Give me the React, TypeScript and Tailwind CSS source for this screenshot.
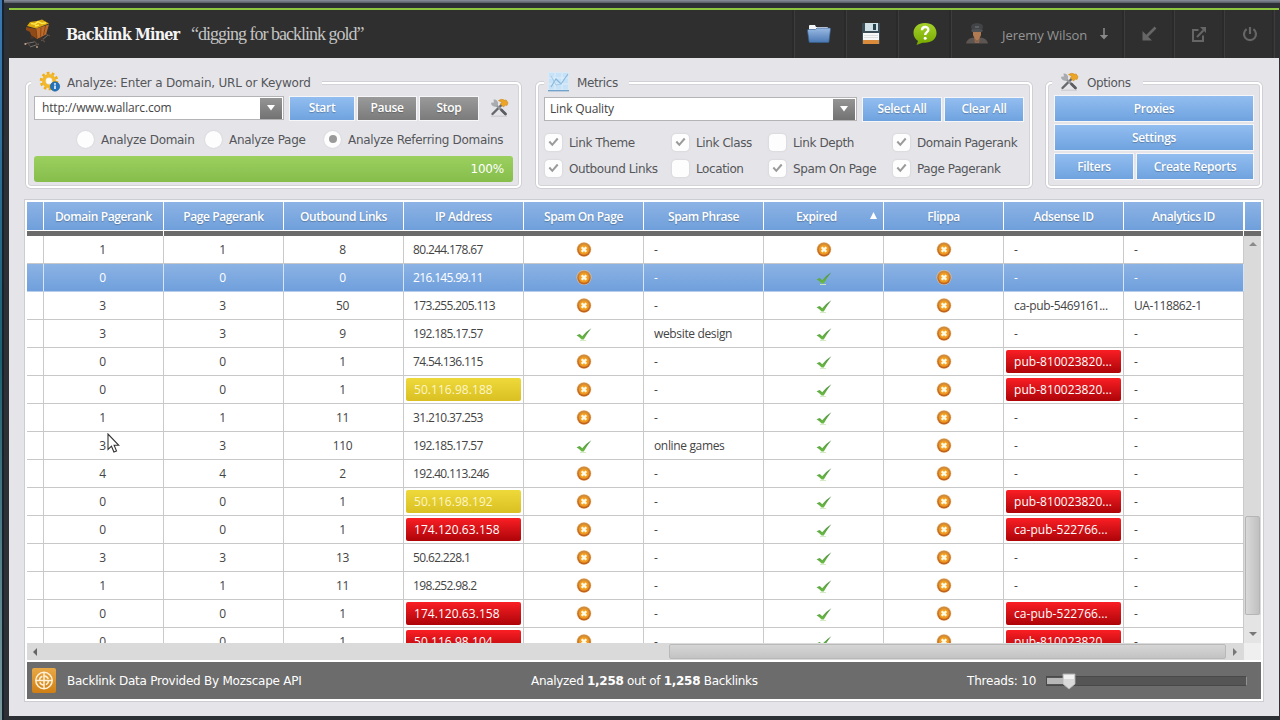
import React from 'react';

type Mark = 'yes' | 'no';

interface LinkRow {
  domainPr: string;
  pagePr: string;
  outbound: string;
  ip: string;
  ipFlag?: 'yellow' | 'red';
  spam: Mark;
  phrase: string;
  expired: Mark;
  adsense: string;
  adsenseFlag?: boolean;
  analytics: string;
  selected?: boolean;
}

const COLUMNS = [
  'Domain Pagerank',
  'Page Pagerank',
  'Outbound Links',
  'IP Address',
  'Spam On Page',
  'Spam Phrase',
  'Expired',
  'Flippa',
  'Adsense ID',
  'Analytics ID',
];

const ROWS: LinkRow[] = [
  { domainPr: '1', pagePr: '1', outbound: '8', ip: '80.244.178.67', spam: 'no', phrase: '-', expired: 'no', adsense: '-', analytics: '-' },
  { domainPr: '0', pagePr: '0', outbound: '0', ip: '216.145.99.11', spam: 'no', phrase: '-', expired: 'yes', adsense: '-', analytics: '-', selected: true },
  { domainPr: '3', pagePr: '3', outbound: '50', ip: '173.255.205.113', spam: 'no', phrase: '-', expired: 'yes', adsense: 'ca-pub-5469161...', analytics: 'UA-118862-1' },
  { domainPr: '3', pagePr: '3', outbound: '9', ip: '192.185.17.57', spam: 'yes', phrase: 'website design', expired: 'yes', adsense: '-', analytics: '-' },
  { domainPr: '0', pagePr: '0', outbound: '1', ip: '74.54.136.115', spam: 'no', phrase: '-', expired: 'yes', adsense: 'pub-810023820...', adsenseFlag: true, analytics: '-' },
  { domainPr: '0', pagePr: '0', outbound: '1', ip: '50.116.98.188', ipFlag: 'yellow', spam: 'no', phrase: '-', expired: 'yes', adsense: 'pub-810023820...', adsenseFlag: true, analytics: '-' },
  { domainPr: '1', pagePr: '1', outbound: '11', ip: '31.210.37.253', spam: 'no', phrase: '-', expired: 'yes', adsense: '-', analytics: '-' },
  { domainPr: '3', pagePr: '3', outbound: '110', ip: '192.185.17.57', spam: 'yes', phrase: 'online games', expired: 'yes', adsense: '-', analytics: '-' },
  { domainPr: '4', pagePr: '4', outbound: '2', ip: '192.40.113.246', spam: 'no', phrase: '-', expired: 'yes', adsense: '-', analytics: '-' },
  { domainPr: '0', pagePr: '0', outbound: '1', ip: '50.116.98.192', ipFlag: 'yellow', spam: 'no', phrase: '-', expired: 'yes', adsense: 'pub-810023820...', adsenseFlag: true, analytics: '-' },
  { domainPr: '0', pagePr: '0', outbound: '1', ip: '174.120.63.158', ipFlag: 'red', spam: 'no', phrase: '-', expired: 'yes', adsense: 'ca-pub-522766...', adsenseFlag: true, analytics: '-' },
  { domainPr: '3', pagePr: '3', outbound: '13', ip: '50.62.228.1', spam: 'no', phrase: '-', expired: 'yes', adsense: '-', analytics: '-' },
  { domainPr: '1', pagePr: '1', outbound: '11', ip: '198.252.98.2', spam: 'no', phrase: '-', expired: 'yes', adsense: '-', analytics: '-' },
  { domainPr: '0', pagePr: '0', outbound: '1', ip: '174.120.63.158', ipFlag: 'red', spam: 'no', phrase: '-', expired: 'yes', adsense: 'ca-pub-522766...', adsenseFlag: true, analytics: '-' },
  { domainPr: '0', pagePr: '0', outbound: '1', ip: '50.116.98.104', ipFlag: 'red', spam: 'no', phrase: '-', expired: 'yes', adsense: 'pub-810023820...', adsenseFlag: true, analytics: '-' },
];

/* ---------- icons ---------- */

const CartIcon = () => (
  <svg width="28" height="30" viewBox="0 0 28 30">
    <path d="M0 25l10-2M6 28l9-3M17 22l7-6" stroke="#77716d" strokeWidth="1" />
    <path d="M3 23l3 4M10 22l4 4M17 20l4 3M22 15l4 2" stroke="#5b4d45" strokeWidth="1.200" />
    <circle cx="1.500" cy="25" r="0.900" fill="#c7a58c" />
    <circle cx="13" cy="28" r="0.900" fill="#c7a58c" />
    <circle cx="8" cy="18.500" r="2.100" fill="#453329" />
    <circle cx="17" cy="19.500" r="2.100" fill="#453329" />
    <path d="M2 8l10 2 1 10-6-4-1-3-4-2z" fill="#8f4a17" />
    <path d="M12 9.500l13-4-3 10-9 4.500z" fill="#bd6c2b" />
    <path d="M12 10l1 9M17 8.500l-.5 9M21.500 7l-2 9" stroke="#7c3d12" strokeWidth="0.800" />
    <path d="M3 7l3-4 7-1 5-1.500 7 4-13 5z" fill="#dca90c" />
    <path d="M7 4.500l4 .7 3-2.500 4 1.800 4-.7M11 7l4-1" stroke="#fbe74e" strokeWidth="1.500" fill="none" />
  </svg>
);

const FolderIcon = () => (
  <svg width="26" height="22" viewBox="0 0 26 22">
    <defs>
      <linearGradient id="folder" x1="0" y1="0" x2="0" y2="1">
        <stop offset="0" stopColor="#9bbbe3" />
        <stop offset="1" stopColor="#4a78b4" />
      </linearGradient>
    </defs>
    <path d="M3 8V3q0-1 1-1h5l1 2h11q1 0 1 1v4z" fill="#f4f6fa" />
    <path d="M1.500 7.500q0-1 1-1h7l1.500-1.500h12.500q1 0 1 1L23 18.500q0 1-1 1H4q-1 0-1-1z" fill="url(#folder)" stroke="#37608f" strokeWidth="0.700" />
  </svg>
);

const FloppyIcon = () => (
  <svg width="20" height="24" viewBox="0 0 20 24">
    <path d="M1 2q0-1 1-1h17v21H1z" fill="#3a4d57" />
    <rect x="4" y="1" width="13" height="8" fill="#cfe0e6" />
    <rect x="12" y="2" width="3" height="6" fill="#274350" />
    <rect x="2" y="11" width="16" height="7" fill="#f7f7f7" />
    <path d="M3 13.500h14M3 15.500h14" stroke="#cfd4d6" strokeWidth="0.700" />
    <rect x="2" y="18" width="16" height="4" fill="#d98a3a" />
  </svg>
);

const HelpIcon = () => (
  <svg width="26" height="24" viewBox="0 0 26 24">
    <defs>
      <linearGradient id="help" x1="0" y1="0" x2="0" y2="1">
        <stop offset="0" stopColor="#a4d12a" />
        <stop offset="1" stopColor="#76a800" />
      </linearGradient>
    </defs>
    <path d="M13 1C6 1 1.500 5 1.500 11c0 3.500 2 6.300 4.500 8L4.500 23l6-2.300c8 .8 14-3.200 14-9.700C24.500 5 20 1 13 1z" fill="url(#help)" />
    <path d="M10 8.300c0-4.300 6.300-4.300 6.300-.6 0 2.400-3.100 2.400-3.100 5.300" stroke="#fff" strokeWidth="2.400" fill="none" />
    <circle cx="13.200" cy="16.300" r="1.500" fill="#fff" />
  </svg>
);

const AvatarIcon = () => (
  <svg width="24" height="24" viewBox="0 0 24 24">
    <path d="M1 21.500q1-5 7-6l4 2 4-2q6 1 7 6z" fill="#5c5552" />
    <path d="M8 10h8v3q-1 4-4 6-3-2-4-6z" fill="#b07a52" />
    <path d="M9 16l3 4 3-4-1 5h-4z" fill="#94694c" />
    <path d="M6 5q0-3.500 6-4 6 .5 6 4l-1 3H7z" fill="#424448" />
    <path d="M6 8q6-2 12 0l-1 2H7z" fill="#4f5155" />
    <path d="M10 5h4" stroke="#7a7a7a" strokeWidth="1" />
  </svg>
);

const DownArrowIcon = () => (
  <svg width="10" height="14" viewBox="0 0 10 14">
    <path d="M5 1v8" stroke="#8a8a8a" strokeWidth="1.600" />
    <path d="M.8 8h8.400L5 12.500z" fill="#8a8a8a" />
  </svg>
);

const MinimizeIcon = () => (
  <svg width="16" height="16" viewBox="0 0 16 16">
    <path d="M14.500 1.500L5 11" stroke="#666" strokeWidth="2.600" />
    <path d="M1.500 5v9.500H11L7.500 11 5 8.500z" fill="#666" />
  </svg>
);

const RestoreIcon = () => (
  <svg width="18" height="17" viewBox="0 0 18 17">
    <path d="M8.500 4H3v11h10V9.500" stroke="#666" strokeWidth="2" fill="none" />
    <path d="M7 11l6.500-6.800" stroke="#666" strokeWidth="2" />
    <path d="M10 1h6v6z" fill="#666" />
  </svg>
);

const PowerIcon = () => (
  <svg width="16" height="16" viewBox="0 0 16 16">
    <path d="M4.600 3.200a6 6 0 1 0 6.800 0M8 1v7" stroke="#666" strokeWidth="2.200" fill="none" />
  </svg>
);

const GearInfoIcon = () => (
  <svg width="22" height="22" viewBox="0 0 22 22">
    <circle cx="10" cy="10" r="7.800" fill="none" stroke="#f0ae1c" strokeWidth="3" strokeDasharray="2.700 2.200" />
    <circle cx="10" cy="10" r="5.200" fill="none" stroke="#f3b92d" strokeWidth="3.600" />
    <circle cx="10" cy="10" r="2.800" fill="#fdfaf0" />
    <circle cx="16" cy="15.500" r="4.700" fill="#2474bd" stroke="#1a5c9b" strokeWidth="0.600" />
    <path d="M16 14.500v3.500" stroke="#fff" strokeWidth="1.500" />
    <circle cx="16" cy="12.900" r="0.900" fill="#fff" />
  </svg>
);

const ChartIcon = () => (
  <svg width="21" height="20" viewBox="0 0 21 20">
    <rect x="0.500" y="0.500" width="20" height="17.500" fill="#c7e1f6" stroke="#d9e9f5" />
    <path d="M1 6h19M1 12h19M7 1v17M14 1v17" stroke="#e4f2fc" strokeWidth="0.800" />
    <path d="M3 15l5-8 5 5 7-10" stroke="#86b6dc" strokeWidth="1.100" fill="none" />
    <path d="M3 4l5 9 5-1" stroke="#9cc6e6" strokeWidth="0.900" fill="none" />
    <path d="M0 18.700h21" stroke="#6a9fc8" strokeWidth="1.300" />
  </svg>
);

const ToolsIcon = () => (
  <svg width="20" height="20" viewBox="0 0 20 20">
    <path d="M2 18.200h16" stroke="#cdcdd1" strokeWidth="1.300" />
    <path d="M13 6.500L3.500 16" stroke="#66686c" strokeWidth="2.400" strokeLinecap="round" />
    <path d="M6 6l10.500 10" stroke="#94969a" strokeWidth="2.400" strokeLinecap="round" />
    <path d="M12.500 12l4 4" stroke="#5b5d61" strokeWidth="2.700" strokeLinecap="round" />
    <path d="M4.500 1.500l.4 3-2.900.3A4 4 0 0 0 7.500 8.500L9 6.500A4 4 0 0 0 4.500 1.500z" fill="#a9abaf" />
    <path d="M9.500 2.500Q13 0 16 2.500l1-.7 2 3-1 2.700-1.500-.5-2 2L11.300 6l1.500-1.500z" fill="#eca525" stroke="#c77f12" strokeWidth="0.500" />
  </svg>
);

const MozIcon = () => (
  <svg width="24" height="26" viewBox="0 0 24 26">
    <defs>
      <linearGradient id="moz" x1="0" y1="0" x2="0" y2="1">
        <stop offset="0" stopColor="#e9a845" />
        <stop offset="1" stopColor="#cf7f14" />
      </linearGradient>
    </defs>
    <rect width="24" height="25" rx="2" fill="url(#moz)" />
    <g fill="none" stroke="#fff1d8" strokeWidth="1.500">
      <circle cx="12" cy="12.500" r="8.200" />
      <circle cx="12" cy="12.500" r="4.500" strokeDasharray="5 2" />
      <path d="M12 4v17M4 12.500h16" />
    </g>
  </svg>
);

const NoIcon = () => (
  <svg className="-mt-px" width="16" height="16" viewBox="0 0 16 16">
    <defs>
      <linearGradient id="no" x1="0" y1="0" x2="0" y2="1">
        <stop offset="0" stopColor="#cf9041" />
        <stop offset="1" stopColor="#c05f18" />
      </linearGradient>
      <radialGradient id="noIn">
        <stop offset="0" stopColor="#ffb52e" />
        <stop offset="1" stopColor="#eb9420" />
      </radialGradient>
    </defs>
    <circle cx="8" cy="8.500" r="7.500" fill="#f8d9b4" opacity="0.700" />
    <circle cx="8" cy="8.500" r="6.900" fill="url(#no)" />
    <circle cx="8" cy="8.500" r="5.200" fill="url(#noIn)" />
    <path d="M5.700 6.200l4.600 4.600M10.300 6.200l-4.600 4.600" stroke="#fffbe6" strokeWidth="2.300" />
  </svg>
);

const YesIcon = () => (
  <svg width="16" height="16" viewBox="0 0 16 16">
    <defs>
      <linearGradient id="yes" x1="0" y1="0" x2="0" y2="1">
        <stop offset="0" stopColor="#4d8a45" />
        <stop offset="1" stopColor="#6bbf42" />
      </linearGradient>
    </defs>
    <path d="M.5 9.300L3.800 8l2.400 2.200Q10 5.500 15.300 2.200 11 7.500 7.800 13.600H5.600Q3.500 11 .5 9.300z" fill="url(#yes)" />
    <path d="M4 14.500h6" stroke="#cfe8c0" strokeWidth="0.900" />
  </svg>
);

const MarkIcon = ({ value }: { value: Mark }) => (value === 'yes' ? <YesIcon /> : <NoIcon />);

const Cursor = () => (
  <svg className="absolute left-[107px] top-[433px]" width="13" height="21" viewBox="0 0 13 21">
    <path d="M1 1v15.500l3.500-3.300 2.400 5.800 2.600-1.100-2.400-5.600h4.700z" fill="#fff" stroke="#333" strokeWidth="1.100" />
  </svg>
);

/* ---------- controls ---------- */

const Button = ({ label, className = '', gray = false }: { label: string; className?: string; gray?: boolean }) => (
  <button
    className={`flex items-center justify-center font-["Open_Sans","Noto_Sans",sans-serif] text-[12px] font-semibold tracking-[-0.3px] text-white shadow-[0_0_0_1px_#f6f6f8] [text-shadow:0_1px_1px_rgba(0,0,0,0.25)] ${
      gray ? 'bg-linear-to-b from-[#9a9a9a] to-[#7b7b7b]' : 'bg-linear-to-b from-[#92bdf0] to-[#6fa3df]'
    } ${className}`}
  >
    {label}
  </button>
);

const Combo = ({ value, className = '' }: { value: string; className?: string }) => (
  <div className={`flex h-[24px] items-center border border-[#b4b4b6] bg-white ${className}`}>
    <span className='flex-1 font-["Open_Sans","Noto_Sans",sans-serif] text-[12px] tracking-[-0.15px] text-[#444]'>{value}</span>
    <span className="mr-px flex h-[21px] w-[22px] items-center justify-center bg-linear-to-b from-[#959595] to-[#727272]">
      <svg width="8" height="6" viewBox="0 0 8 6">
        <path d="M0 0h8L4 5.500z" fill="#fff" />
      </svg>
    </span>
  </div>
);

const Radio = ({ label, checked = false, className = '' }: { label: string; checked?: boolean; className?: string }) => (
  <label className={`flex items-center gap-[7px] ${className}`}>
    <span className="flex size-[17px] shrink-0 items-center justify-center rounded-full bg-[#fdfdfd] shadow-[0_0_2px_#c9c9cf]">
      {checked && <span className="size-2 rounded-full bg-[#9a9a9a]" />}
    </span>
    <span className="whitespace-nowrap pt-px">{label}</span>
  </label>
);

const Check = ({ label, checked = false }: { label: string; checked?: boolean }) => (
  <label className="flex h-5 items-center gap-[7px]">
    <span className="flex size-[17px] shrink-0 items-center justify-center rounded-[4px] bg-[#fdfdfd] shadow-[0_0_2px_#c2c2c8]">
      {checked && (
        <svg width="11" height="10" viewBox="0 0 11 10">
          <path d="M1.300 4.500l3 3.300L9.700 1.500" stroke="#9a9a9a" strokeWidth="2" fill="none" />
        </svg>
      )}
    </span>
    <span className="whitespace-nowrap pt-[2px]">{label}</span>
  </label>
);

interface PanelProps {
  title: string;
  icon: React.ReactNode;
  className: string;
  legendClass: string;
  children: React.ReactNode;
}

const Panel = ({ title, icon, className, legendClass, children }: PanelProps) => (
  <section
    className={`flex h-[106px] flex-col rounded-[5px] border-2 border-white shadow-[0_0_0_1px_#cfcfd5,inset_0_0_0_1px_#d3d3d8] ${className}`}
  >
    <div className={`-mt-3 flex h-5 shrink-0 items-center bg-[#e5e5e9] ${legendClass}`}>
      {icon}
      <span className="whitespace-nowrap pt-px">{title}</span>
    </div>
    {children}
  </section>
);

/* ---------- sections ---------- */

const ToolbarCell = ({ className, children }: { className: string; children?: React.ReactNode }) => (
  <div className={`flex h-full items-center border-l border-[#3d3d3d] shadow-[-2px_0_0_#2a2a2a] ${className}`}>
    {children}
  </div>
);

const TopBar = () => (
  <header className="flex h-[48px] shrink-0 items-center bg-[#2f2f2f]">
    <div className="ml-[15px] w-[42px]">
      <CartIcon />
    </div>
    <h1 className='w-[125px] whitespace-nowrap pt-px font-["DejaVu_Serif_Condensed","DejaVu_Serif",serif] text-[16px] font-bold tracking-[-0.85px] text-[#f4f4f4]'>
      Backlink Miner
    </h1>
    <p className='whitespace-nowrap pt-px font-["Liberation_Serif",serif] text-[18px] tracking-[-1px] text-[#c4c4c4]'>
      “digging for backlink gold”
    </p>
    <nav className="ml-auto mr-1 flex h-full">
      <ToolbarCell className="w-[52px] pl-[11px]"><FolderIcon /></ToolbarCell>
      <ToolbarCell className="w-[52px] pl-[14px]"><FloppyIcon /></ToolbarCell>
      <ToolbarCell className="w-[53px] pl-[13px]"><HelpIcon /></ToolbarCell>
      <ToolbarCell className="w-[173px] pl-[13px]">
        <AvatarIcon />
        <span className='ml-[13px] w-[97px] whitespace-nowrap pt-[3px] font-["Open_Sans","Noto_Sans",sans-serif] text-[13px] tracking-[-0.05px] text-[#959595]'>
          Jeremy Wilson
        </span>
        <DownArrowIcon />
      </ToolbarCell>
      <ToolbarCell className="w-[50px] pl-[16px]"><MinimizeIcon /></ToolbarCell>
      <ToolbarCell className="w-[50px] pl-[15px]"><RestoreIcon /></ToolbarCell>
      <ToolbarCell className="w-[50px] pl-[17px]"><PowerIcon /></ToolbarCell>
      <ToolbarCell className="w-0" />
    </nav>
  </header>
);

const AnalyzePanel = () => (
  <Panel
    title="Analyze: Enter a Domain, URL or Keyword"
    icon={<GearInfoIcon />}
    className="w-[495px] px-[6px]"
    legendClass="-ml-[3px] w-[291px] gap-[6px] pl-[8px]"
  >
    <div className="mt-[4px] flex h-[24px] items-center">
      <Combo value="http://www.wallarc.com" className="w-[250px] pl-[7px]" />
      <Button label="Start" className="ml-[6px] h-[23px] w-[64px]" />
      <Button label="Pause" gray className="ml-1 h-[23px] w-[58px]" />
      <Button label="Stop" gray className="ml-1 h-[23px] w-[58px]" />
      <span className="ml-[11px]"><ToolsIcon /></span>
    </div>
    <div className="mt-[10px] flex h-[18px] items-center pl-[43px] tracking-[-0.3px]">
      <Radio label="Analyze Domain" className="w-[128px]" />
      <Radio label="Analyze Page" className="w-[119px]" />
      <Radio label="Analyze Referring Domains" checked />
    </div>
    <div className="mt-[8px] flex h-[26px] w-[479px] items-center justify-end rounded-[3px] bg-linear-to-b from-[#9bd05f] to-[#86bd4b] pr-[9px] text-white">
      100%
    </div>
  </Panel>
);

const MetricsPanel = () => (
  <Panel
    title="Metrics"
    icon={<ChartIcon />}
    className="ml-[15px] w-[496px] px-[6px]"
    legendClass="w-[85px] gap-[8px] pl-[4px] tracking-[-0.4px]"
  >
    <div className="mt-[5px] flex h-[24px] items-center">
      <Combo value="Link Quality" className="w-[313px] pl-[5px]" />
      <Button label="Select All" className="ml-[6px] h-[23px] w-[78px]" />
      <Button label="Clear All" className="ml-1 h-[23px] w-[78px]" />
    </div>
    <div className="mt-[11px] grid grid-cols-[127px_97px_124px_130px] gap-y-[6px] pl-px tracking-[-0.4px]">
      <Check label="Link Theme" checked />
      <Check label="Link Class" checked />
      <Check label="Link Depth" />
      <Check label="Domain Pagerank" checked />
      <Check label="Outbound Links" checked />
      <Check label="Location" />
      <Check label="Spam On Page" checked />
      <Check label="Page Pagerank" checked />
    </div>
  </Panel>
);

const OptionsPanel = () => (
  <Panel
    title="Options"
    icon={<ToolsIcon />}
    className="ml-[14px] w-[216px] px-[7px]"
    legendClass="-ml-[3px] w-[91px] gap-[8px] pl-[7px] tracking-[-0.4px]"
  >
    <div className="mt-[4px] flex flex-col gap-1">
      <Button label="Proxies" className="h-[25px]" />
      <Button label="Settings" className="h-[25px]" />
      <div className="flex gap-1">
        <Button label="Filters" className="h-[25px] w-[78px]" />
        <Button label="Create Reports" className="h-[25px] flex-1" />
      </div>
    </div>
  </Panel>
);

const TableHeader = () => (
  <div className="shrink-0">
    <div className='flex h-[28px] bg-linear-to-b from-[#8cb3e5] to-[#6f9fdb] font-["Open_Sans","Noto_Sans",sans-serif] text-[12px] font-semibold text-white [text-shadow:0_1px_1px_rgba(0,0,0,0.25)]'>
      <div className="w-[17px] border-r border-white" />
      {COLUMNS.map((name) => (
        <div
          key={name}
          className="relative flex w-[120px] items-center justify-center whitespace-nowrap border-r border-white pt-[2px] tracking-[-0.4px]"
        >
          <span className={name === 'Expired' ? 'mr-[14px]' : ''}>{name}</span>
          {name === 'Expired' && (
            <svg className="absolute right-[6px] top-[10px]" width="7" height="7" viewBox="0 0 7 7">
              <path d="M3.500 0L7 7H0z" fill="#fff" />
            </svg>
          )}
        </div>
      ))}
      <div className="flex-1 border-l border-white" />
    </div>
    <div className="mt-px flex h-[5px] bg-[#6b6b6b]">
      <div className="w-[137px] border-r border-white" />
      <div className="w-[1080px] border-r border-white" />
    </div>
  </div>
);

const Pill = ({ text, tone }: { text: string; tone: 'yellow' | 'red' }) => (
  <span
    className={`mx-[2px] flex h-[23px] flex-1 items-center rounded-[2px] pl-[8px] tracking-[0.05px] ${
      tone === 'red'
        ? 'bg-linear-to-b from-[#fa1e24] to-[#ad0408] text-white'
        : 'bg-linear-to-b from-[#eed93a] to-[#dac022] text-[#fdf6c8]'
    }`}
  >
    {text}
  </span>
);

const TableRow = ({ row }: { row: LinkRow }) => {
  const cell = `flex w-[120px] shrink-0 items-center whitespace-nowrap border-r ${
    row.selected ? 'border-[#d5e4f7]' : 'border-[#cacaca]'
  }`;
  return (
    <div
      className={`flex h-[28px] shrink-0 border-b ${
        row.selected
          ? 'border-[#b7cdea] bg-linear-to-b from-[#8cb3e4] to-[#6f9fdc] text-white'
          : 'border-[#c8c8c8] bg-white text-[#444]'
      }`}
    >
      <div className={`w-[17px] border-r ${row.selected ? 'border-[#d5e4f7]' : 'border-[#cacaca]'}`} />
      <div className={`${cell} justify-center pr-[2px]`}>{row.domainPr}</div>
      <div className={`${cell} justify-center pr-[2px]`}>{row.pagePr}</div>
      <div className={`${cell} justify-center pr-[2px] tracking-[-0.3px]`}>{row.outbound}</div>
      <div className={cell}>
        {row.ipFlag ? <Pill text={row.ip} tone={row.ipFlag} /> : <span className="pl-[9px] tracking-[-0.65px]">{row.ip}</span>}
      </div>
      <div className={`${cell} justify-center`}><MarkIcon value={row.spam} /></div>
      <div className={`${cell} pl-[10px] tracking-[-0.35px]`}>{row.phrase}</div>
      <div className={`${cell} justify-center`}><MarkIcon value={row.expired} /></div>
      <div className={`${cell} justify-center`}><NoIcon /></div>
      <div className={cell}>
        {row.adsenseFlag ? <Pill text={row.adsense} tone="red" /> : <span className="pl-[10px] tracking-[-0.35px]">{row.adsense}</span>}
      </div>
      <div className={`${cell} pl-[10px] tracking-[-0.4px]`}>{row.analytics}</div>
    </div>
  );
};

const VerticalScroll = () => (
  <div className="flex w-[17px] shrink-0 flex-col items-center bg-[#dadada]">
    <svg className="mt-[6px]" width="8" height="4" viewBox="0 0 8 4">
      <path d="M0 4h8L4 0z" fill="#8a8a8a" />
    </svg>
    <div className="mt-[270px] h-[99px] w-[15px] rounded-[2px] border border-[#b5b5b5] bg-linear-to-r from-[#d9d9d9] to-[#c0c0c0]" />
    <div className="flex w-full flex-1 items-center justify-center bg-[#e4e4e4] pt-[10px]">
      <svg width="8" height="4" viewBox="0 0 8 4">
        <path d="M0 0h8L4 4z" fill="#777" />
      </svg>
    </div>
  </div>
);

const HorizontalScroll = () => (
  <div className="flex h-[17px] shrink-0 items-center bg-[#dadada]">
    <svg className="ml-[6px]" width="4" height="8" viewBox="0 0 4 8">
      <path d="M4 0v8L0 4z" fill="#666" />
    </svg>
    <div className="ml-[632px] h-[15px] w-[557px] rounded-[2px] border border-[#b9b9b9] bg-linear-to-b from-[#d6d6d6] to-[#c3c3c3]" />
    <svg className="ml-[7px]" width="4" height="8" viewBox="0 0 4 8">
      <path d="M0 0v8l4-4z" fill="#777" />
    </svg>
    <div className="ml-auto h-full w-[17px] bg-[#efefef]" />
  </div>
);

const StatusBar = () => (
  <footer className="mt-[2px] flex flex-1 items-center bg-[#6c6c6c] text-white">
    <span className="ml-[5px]"><MozIcon /></span>
    <span className="ml-[11px] w-[464px] whitespace-nowrap pt-px tracking-[-0.24px]">Backlink Data Provided By Mozscape API</span>
    <span className="w-[436px] whitespace-nowrap pt-px tracking-[-0.3px]">
      Analyzed <b>1,258</b> out of <b>1,258</b> Backlinks
    </span>
    <span className="w-[79px] whitespace-nowrap pt-px tracking-[-0.2px]">Threads: 10</span>
    <div className="relative flex h-[10px] w-[201px] border border-[#494949] border-r-[#929292] bg-[#555]">
      <div className="mt-px h-[6px] w-[17px] bg-[#b7b7b7]" />
      <svg className="absolute left-[15px] top-[-4px]" width="14" height="17" viewBox="0 0 14 17">
        <path d="M1 1h12v10l-6 5-6-5z" fill="#d9d9d9" stroke="#b8b8b8" strokeWidth="0.800" />
        <path d="M2 2h10v4H2z" fill="#f1f1f1" />
      </svg>
    </div>
  </footer>
);

const LinksTable = () => (
  <section className="ml-[16px] mt-[12px] flex h-[501px] w-[1238px] flex-col border-2 border-white bg-white shadow-[0_0_0_1px_#cccdd3]">
    <TableHeader />
    <div className='flex h-[407px] shrink-0 overflow-hidden font-["Open_Sans","Noto_Sans",sans-serif] text-[12px]'>
      <div className="flex w-[1217px] shrink-0 flex-col overflow-hidden">
        {ROWS.map((row, i) => (
          <TableRow key={i} row={row} />
        ))}
      </div>
      <VerticalScroll />
    </div>
    <HorizontalScroll />
    <StatusBar />
  </section>
);

const App: React.FC = () => (
  <div className='relative flex h-[720px] w-[1280px] overflow-hidden bg-[#2d3136] font-["DejaVu_Sans",sans-serif] text-[12px] tracking-[-0.2px] text-[#55565a]'>
    <div className="w-[2px] shrink-0 bg-linear-to-b from-[#3b78b5] via-[#1b6070] to-[#7b9a9c]" />
    <div className="w-[2px] shrink-0 bg-[#16222d]" />
    <div className="flex min-w-0 flex-1 flex-col">
      <div className="h-[3px] shrink-0 bg-linear-to-b from-[#8b909b] to-[#555b65]" />
      <div className="ml-[5px] mt-[5px] flex w-[1270px] flex-1 flex-col">
        <div className="h-[2px] shrink-0 bg-[#8cc63f]" />
        <TopBar />
        <main className="flex flex-1 flex-col bg-[#e5e5e9]">
          <div className="ml-[17px] mt-[24px] flex">
            <AnalyzePanel />
            <MetricsPanel />
            <OptionsPanel />
          </div>
          <LinksTable />
        </main>
      </div>
      <div className="h-[4px] shrink-0 bg-[#2c3034]" />
    </div>
    <Cursor />
  </div>
);

export default App;
